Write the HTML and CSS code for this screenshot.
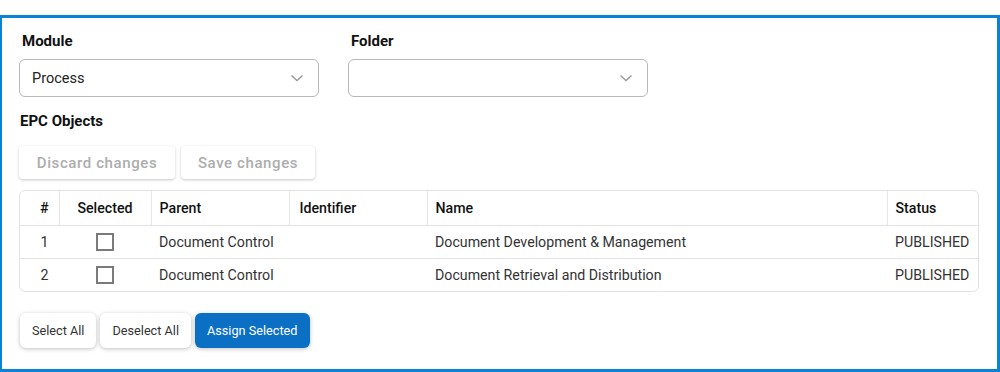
FILE: index.html
```html
<!DOCTYPE html>
<html lang="en">
<head>
    <meta charset="UTF-8">
    <meta name="viewport" content="width=device-width, initial-scale=1.0">
    <title>EPC Objects</title>
    <link rel="stylesheet" href="styles.css">
</head>
<body>
    <div class="panel">
        <div class="filters">
            <div class="field">
                <label class="field-label">Module</label>
                <div class="select">
                    <span>Process</span>
                    <svg class="chevron" width="14" height="8" viewBox="0 0 14 8"><path d="M1.5 1.5 L7 6.5 L12.5 1.5" fill="none" stroke="#9a9a9a" stroke-width="1.4"/></svg>
                </div>
            </div>
            <div class="field">
                <label class="field-label">Folder</label>
                <div class="select">
                    <span></span>
                    <svg class="chevron" width="14" height="8" viewBox="0 0 14 8"><path d="M1.5 1.5 L7 6.5 L12.5 1.5" fill="none" stroke="#9a9a9a" stroke-width="1.4"/></svg>
                </div>
            </div>
        </div>

        <h3 class="section-title">EPC Objects</h3>

        <div class="toolbar">
            <button type="button" class="btn-flat" disabled>Discard changes</button>
            <button type="button" class="btn-flat" disabled>Save changes</button>
        </div>

        <div class="grid">
            <table>
                <thead>
                    <tr>
                        <th class="col-num">#</th>
                        <th class="col-sel">Selected</th>
                        <th class="col-parent">Parent</th>
                        <th class="col-id">Identifier</th>
                        <th class="col-name">Name</th>
                        <th class="col-status">Status</th>
                    </tr>
                </thead>
                <tbody>
                    <tr>
                        <td class="col-num">1</td>
                        <td class="col-sel"><span class="check"></span></td>
                        <td>Document Control</td>
                        <td></td>
                        <td>Document Development &amp; Management</td>
                        <td>PUBLISHED</td>
                    </tr>
                    <tr>
                        <td class="col-num">2</td>
                        <td class="col-sel"><span class="check"></span></td>
                        <td>Document Control</td>
                        <td></td>
                        <td>Document Retrieval and Distribution</td>
                        <td>PUBLISHED</td>
                    </tr>
                </tbody>
            </table>
        </div>

        <div class="actions">
            <button type="button" class="btn">Select All</button>
            <button type="button" class="btn">Deselect All</button>
            <button type="button" class="btn btn-primary">Assign Selected</button>
        </div>
    </div>
</body>
</html>
```

FILE: styles.css
```css
*{
    box-sizing: border-box;
}
body{
    margin: 0;
    padding: 0;
    font-family: Roboto, "Liberation Sans", sans-serif;
    color: #222;
    background: #ffffff;
}
.panel{
    margin-top: 15px;
    height: 357px;
    border: 3px solid #0a84d2;
    border-left-width: 2px;
    padding: 13px 18px 0px 17px;
}
.filters{
    display: flex;
    gap: 29px;
}
.field{
    width: 300px;
}
.field-label{
    display: block;
    font-size: 15px;
    font-weight: bold;
    line-height: 20px;
    padding-left: 3px;
    color: #111;
}
.select{
    margin-top: 8px;
    height: 38px;
    border: 1px solid #b8b8b8;
    border-radius: 6px;
    display: flex;
    align-items: center;
    justify-content: space-between;
    padding: 0px 14px 0px 12px;
    font-size: 14.5px;
    color: #222;
}
.chevron{
    display: block;
}
.section-title{
    margin: 14px 0px 0px 1px;
    font-size: 15px;
    line-height: 20px;
    font-weight: bold;
    color: #111;
}
.toolbar{
    margin-top: 15px;
    display: flex;
    gap: 6px;
}
.btn-flat{
    height: 33px;
    padding: 0px 12px;
    border: none;
    border-radius: 4px;
    background: #ffffff;
    color: #adadad;
    font-family: Roboto, "Liberation Sans", sans-serif;
    font-size: 15px;
    font-weight: 500;
    letter-spacing: 0.6px;
    box-shadow: 0px 1px 3px rgba(0, 0, 0, 0.22);
}
.btn-flat:first-child{
    width: 156px;
}
.btn-flat:last-child{
    width: 134px;
}
.grid{
    margin-top: 11px;
    width: 960px;
    border: 1px solid #e2e2e2;
    border-radius: 6px;
    overflow: hidden;
}
.grid table{
    width: 100%;
    border-collapse: collapse;
    table-layout: fixed;
    font-size: 14.2px;
}
.grid th{
    height: 34px;
    text-align: left;
    font-weight: 500;
    color: #111;
    padding: 0px 8px;
    border-left: 1px solid #e6e6e6;
}
.grid th:first-child{
    border-left: none;
}
.grid td{
    height: 33px;
    padding: 0px 8px;
    color: #333;
    border-top: 1px solid #e2e2e2;
}
.grid .col-num{
    width: 39px;
    text-align: center;
    padding: 0px 0px 0px 10px;
}
.grid .col-sel{
    width: 92px;
    text-align: center;
}
.grid .col-parent,
.grid .col-id{
    width: 138px;
}
.grid th.col-id{
    padding-left: 10px;
}
.grid .col-name{
    width: 460px;
}
.grid .col-status{
    width: 92px;
}
.check{
    display: inline-block;
    width: 18px;
    height: 18px;
    border: 2px solid #7a7a7a;
    vertical-align: middle;
}
.actions{
    margin-top: 21px;
    margin-left: 1px;
    display: flex;
    gap: 4px;
}
.btn{
    height: 35px;
    padding: 0px 12px;
    border: none;
    border-radius: 6px;
    background: #ffffff;
    color: #333;
    font-family: Roboto, "Liberation Sans", sans-serif;
    font-size: 12.7px;
    box-shadow: 0px 1px 4px rgba(0, 0, 0, 0.25);
}
.btn-primary{
    background: #0b6fc4;
    color: #ffffff;
}
```
